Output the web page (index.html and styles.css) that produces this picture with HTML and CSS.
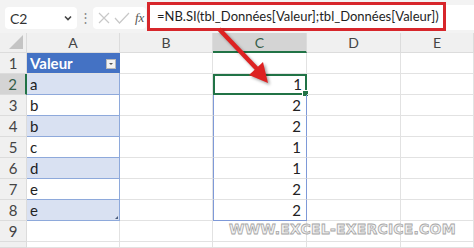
FILE: index.html
```html
<!DOCTYPE html>
<html>
<head>
    <meta charset="utf-8">
    <title>NB.SI - Excel</title>
    <link rel="stylesheet" href="styles.css">
</head>
<body>
    <div class="toolbar">
        <div class="namebox">
            <span>C2</span>
            <svg class="chev" width="8" height="6" viewBox="0 0 8 6"><path d="M1 1.5 L4 4.5 L7 1.5" fill="none" stroke="#444" stroke-width="1.6"/></svg>
        </div>
        <div class="dots">⋮</div>
        <div class="fxbox">
            <svg width="14" height="14" viewBox="0 0 14 14"><path d="M2 2 L12 12 M12 2 L2 12" stroke="#c8c8c8" stroke-width="1.2"/></svg>
            <svg width="16" height="14" viewBox="0 0 16 14"><path d="M1 7 L5.5 12 L15 2" fill="none" stroke="#c8c8c8" stroke-width="1.2"/></svg>
            <span class="fx">fx</span>
        </div>
        <div class="formula">
            <div class="callout">=NB.SI(tbl_Données[Valeur];tbl_Données[Valeur])</div>
        </div>
    </div>

    <div class="sheet">
        <div class="hd corner"><span class="tri"></span></div>
        <div class="hd col">A</div>
        <div class="hd col">B</div>
        <div class="hd col active-col">C</div>
        <div class="hd col">D</div>
        <div class="hd col">E</div>

        <div class="hd row">1</div>
        <div class="c th">Valeur<span class="filter"></span></div>
        <div class="c"></div>
        <div class="c"></div>
        <div class="c"></div>
        <div class="c"></div>

        <div class="hd row active-row">2</div>
        <div class="c tb band">a</div>
        <div class="c"></div>
        <div class="c num sel">1<span class="handle"></span></div>
        <div class="c"></div>
        <div class="c"></div>

        <div class="hd row">3</div>
        <div class="c tb">b</div>
        <div class="c"></div>
        <div class="c num spill">2</div>
        <div class="c"></div>
        <div class="c"></div>

        <div class="hd row">4</div>
        <div class="c tb band">b</div>
        <div class="c"></div>
        <div class="c num spill">2</div>
        <div class="c"></div>
        <div class="c"></div>

        <div class="hd row">5</div>
        <div class="c tb">c</div>
        <div class="c"></div>
        <div class="c num spill">1</div>
        <div class="c"></div>
        <div class="c"></div>

        <div class="hd row">6</div>
        <div class="c tb band">d</div>
        <div class="c"></div>
        <div class="c num spill">1</div>
        <div class="c"></div>
        <div class="c"></div>

        <div class="hd row">7</div>
        <div class="c tb">e</div>
        <div class="c"></div>
        <div class="c num spill">2</div>
        <div class="c"></div>
        <div class="c"></div>

        <div class="hd row">8</div>
        <div class="c tb band last">e<span class="resize"></span></div>
        <div class="c"></div>
        <div class="c num spill spill-end">2</div>
        <div class="c"></div>
        <div class="c"></div>

        <div class="hd row">9</div>
        <div class="c"></div>
        <div class="c"></div>
        <div class="c"></div>
        <div class="c"></div>
        <div class="c"></div>

        <div class="hd row"></div>
        <div class="c"></div>
        <div class="c"></div>
        <div class="c"></div>
        <div class="c"></div>
        <div class="c"></div>
    </div>

    <!-- annotation overlays -->
    <svg class="arrow" width="474" height="248" viewBox="0 0 474 248">
        <line x1="219" y1="29" x2="258" y2="70" stroke="#dd2222" stroke-width="4.5"/>
        <polygon points="268,83 249,75 263,62" fill="#dd2222"/>
    </svg>
    <div class="watermark">WWW.EXCEL-EXERCICE.COM</div>
</body>
</html>
```

FILE: styles.css
```css
body {
    margin: 0;
    width: 474px;
    height: 248px;
    overflow: hidden;
    background: #fff;
    font-family: Lato, "Open Sans", sans-serif;
    color: #222;
    position: relative;
}
.toolbar {
    display: flex;
    align-items: flex-start;
    height: 33px;
    background: #f3f3f3;
}
.namebox {
    display: flex;
    align-items: center;
    justify-content: space-between;
    box-sizing: border-box;
    width: 72px;
    height: 22px;
    margin: 7px 0 0 5px;
    padding: 0 5px 0 5px;
    background: #fff;
    border-radius: 4px;
    font-size: 14px;
    color: #333;
}
.dots {
    width: 16px;
    margin-top: 9px;
    text-align: center;
    font-size: 13px;
    line-height: 16px;
    color: #888;
}
.fxbox {
    display: flex;
    align-items: center;
    gap: 3px;
    box-sizing: border-box;
    width: 53px;
    height: 22px;
    margin-top: 7px;
    padding-left: 4px;
    background: #fff;
    border-radius: 4px;
}
.fx {
    font-family: "Liberation Serif", serif;
    font-style: italic;
    font-size: 13px;
    color: #555;
    margin-left: 2px;
}
.formula {
    flex: 1;
    height: 25px;
    margin: 5px 0 0 1px;
    background: #fff;
}
.callout {
    box-sizing: border-box;
    width: 299px;
    height: 29px;
    margin-top: -3px;
    padding-left: 7px;
    border: 3px solid #d7262b;
    font-size: 13px;
    line-height: 23px;
    color: #1e1e1e;
    white-space: nowrap;
}

.sheet {
    display: grid;
    grid-template-columns: 27px 93px 93px 94px 94px 73px;
    grid-template-rows: 20px repeat(9, 21px) 6px;
}
.hd {
    box-sizing: border-box;
    background: #f0f0f0;
    color: #444;
    border-right: 1px solid #dcdcdc;
    border-bottom: 1px solid #dcdcdc;
    text-align: center;
}
.corner {
    position: relative;
}
.tri {
    position: absolute;
    right: 3px;
    bottom: 3px;
    width: 0;
    height: 0;
    border-left: 14px solid transparent;
    border-bottom: 14px solid #c4c4c4;
}
.col {
    font-size: 14px;
    line-height: 20px;
}
.row {
    font-size: 15px;
    line-height: 21px;
}
.active-col {
    background: #d4d4d4;
    color: #355e4a;
    border-bottom: 2px solid #217346;
}
.active-row {
    background: #d4d4d4;
    color: #355e4a;
    border-right: 2px solid #217346;
}
.c {
    box-sizing: border-box;
    position: relative;
    border-right: 1px solid #e2e2e2;
    border-bottom: 1px solid #e2e2e2;
    padding: 0 3px;
    font-size: 15px;
    line-height: 21px;
}
.th {
    background: #4472c4;
    color: #fff;
    font-weight: bold;
    border-right: 1px solid #4472c4;
}
.filter {
    position: absolute;
    right: 3px;
    top: 6px;
    width: 10px;
    height: 10px;
    box-sizing: border-box;
    background: #f2f2f2;
    border: 1px solid #b8b8b8;
}
.filter::after {
    content: "";
    position: absolute;
    left: 2px;
    top: 3px;
    border-left: 2px solid transparent;
    border-right: 2px solid transparent;
    border-top: 2px solid #555;
}
.tb {
    border-right: 1px solid #8ea9db;
    border-bottom: 1px solid #8ea9db;
}
.band {
    background: #d9e1f2;
}
.resize {
    position: absolute;
    right: 1px;
    bottom: 1px;
    border-left: 3px solid transparent;
    border-bottom: 3px solid #4b5d7d;
}
.num {
    text-align: right;
    padding-right: 5px;
}
.sel {
    border: 2px solid #217346;
    line-height: 17px;
    padding-right: 3px;
}
.handle {
    position: absolute;
    right: -4px;
    bottom: -4px;
    width: 5px;
    height: 5px;
    background: #217346;
    border: 1px solid #fff;
}
.spill {
    border-left: 1px solid #7e99d8;
    border-right: 1px solid #7e99d8;
}
.spill-end {
    border-bottom: 1px solid #7e99d8;
}

.arrow {
    position: absolute;
    left: 0;
    top: 0;
    filter: drop-shadow(2px 2px 1.5px rgba(0, 0, 0, 0.35));
}
.watermark {
    position: absolute;
    left: 229px;
    top: 221px;
    font-family: "DejaVu Sans", sans-serif;
    font-weight: bold;
    font-size: 14px;
    letter-spacing: 0.2px;
    color: #f2f2f2;
    -webkit-text-stroke: 0.8px #a6a6a6;
}
```
